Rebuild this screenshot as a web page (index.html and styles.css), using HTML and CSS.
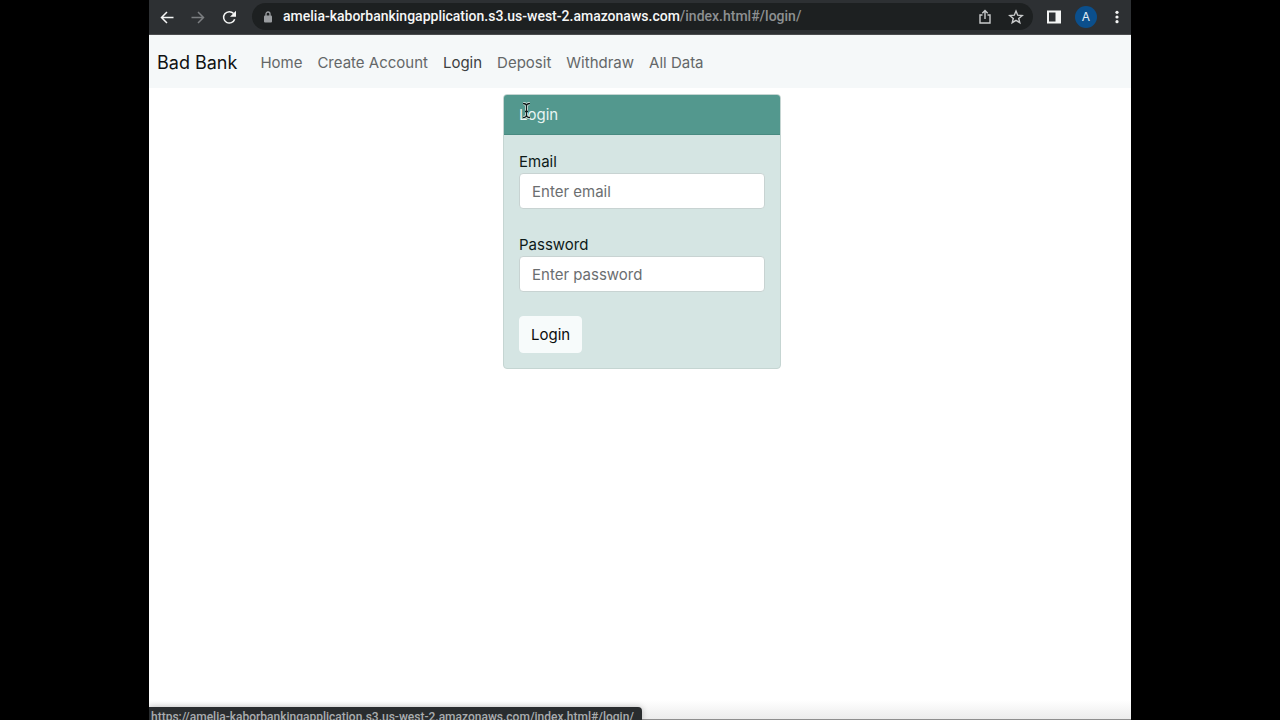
FILE: index.html
```html
<!DOCTYPE html>
<html lang="en">
<head>
<meta charset="utf-8">
<title>Bad Bank</title>
<link rel="stylesheet" href="styles.css">
</head>
<body>
<div class="window">
  <header class="toolbar">
    <button class="tool" aria-label="Back"><svg width="16" height="16" viewBox="0 0 16 16" class="line"><path d="M14.500 8.500H2.500M8 3 2.500 8.500 8 14"/></svg></button>
    <button class="tool tool-off" aria-label="Forward"><svg width="16" height="16" viewBox="0 0 16 16" class="line"><path d="M1.500 8.500h12M8 3 13.500 8.500 8 14"/></svg></button>
    <button class="tool" aria-label="Reload"><svg width="16" height="16" viewBox="0 0 16 16"><path class="line" d="M13.700 10.200A5.700 5.700 0 1 1 12.600 4.600"/><path fill="currentColor" d="M15 1.700v6H9z"/></svg></button>
    <div class="address">
      <svg class="lock" width="10" height="12" viewBox="0 0 10 12"><rect x="1" y="4.500" width="8" height="7" rx="1" fill="currentColor"/><path d="M3 5V3a2 2 0 0 1 4 0v2" fill="none" stroke="currentColor" stroke-width="1.300"/></svg>
      <span class="url">amelia-kaborbankingapplication.s3.us-west-2.amazonaws.com<span class="path">/index.html#/login/</span></span>
      <button class="tool tool-soft" aria-label="Share"><svg width="14" height="16" viewBox="0 0 14 16" class="line thin"><path d="M4.500 6H2v8h10V6H9.500M7 10V1.800M4.300 4.300 7 1.600l2.700 2.700"/></svg></button>
      <button class="tool tool-soft" aria-label="Bookmark"><svg width="16" height="16" viewBox="0 0 16 16" class="line thin"><path d="m8 2 1.700 4.200 4.500.3-3.500 2.900 1.100 4.300L8 11.300l-3.800 2.400 1.100-4.300-3.500-2.900 4.500-.3z"/></svg></button>
    </div>
    <button class="tool panel" aria-label="Side panel"><svg width="14" height="14" viewBox="0 0 14 14"><path fill="currentColor" fill-rule="evenodd" d="M0 .5h14v13H0zM2 2.500v9h6.500v-9z"/></svg></button>
    <button class="avatar" aria-label="Profile">A</button>
    <button class="tool menu" aria-label="Menu"><svg width="4" height="14" viewBox="0 0 4 14" fill="currentColor"><circle cx="2" cy="2.300" r="1.600"/><circle cx="2" cy="7" r="1.600"/><circle cx="2" cy="11.700" r="1.600"/></svg></button>
  </header>
  <nav class="navbar">
    <a class="brand" href="#/">Bad Bank</a>
    <a class="link" href="#/">Home</a>
    <a class="link" href="#/CreateAccount/">Create Account</a>
    <a class="link link-active" href="#/login/">Login</a>
    <a class="link" href="#/deposit/">Deposit</a>
    <a class="link" href="#/withdraw/">Withdraw</a>
    <a class="link" href="#/alldata/">All Data</a>
  </nav>
  <main class="content">
    <section class="card">
      <div class="card-header">Login
        <svg class="cursor" width="9" height="17" viewBox="0 0 9 17" fill="none"><path d="M1 1.500Q4.500 1.500 4.500 4Q4.500 1.500 8 1.500M4.500 4v9M1 15.500Q4.500 15.500 4.500 13Q4.500 15.500 8 15.500M3 9.500h3" stroke="#d8ebe7" stroke-width="3"/><path d="M1 1.500Q4.500 1.500 4.500 4Q4.500 1.500 8 1.500M4.500 4v9M1 15.500Q4.500 15.500 4.500 13Q4.500 15.500 8 15.500M3 9.500h3" stroke="#101b1a" stroke-width="1.300"/></svg>
      </div>
      <form class="card-body">
        <div class="field">
          <label for="email">Email</label>
          <input id="email" type="email" placeholder="Enter email">
        </div>
        <div class="field">
          <label for="password">Password</label>
          <input id="password" type="password" placeholder="Enter password">
        </div>
        <button class="submit" type="button">Login</button>
      </form>
    </section>
  </main>
  <div class="shade"></div>
  <div class="status">https://amelia-kaborbankingapplication.s3.us-west-2.amazonaws.com/index.html#/login/</div>
</div>
</body>
</html>
```
FILE: styles.css
```css
* { box-sizing: border-box; }
body {
  margin: 0;
  padding: 0 149px;
  background: #000;
  font-family: Inter, "Liberation Sans", sans-serif;
  font-size: 15px;
  line-height: 23px;
}
button, input { font: inherit; }
.window {
  position: relative;
  display: flex;
  flex-direction: column;
  min-height: 100vh;
  overflow: hidden;
  background: #fff;
}
.toolbar {
  display: flex;
  align-items: center;
  height: 35px;
  padding: 0 6px 1px 10px;
  background: #2d3033;
  border-bottom: 1px solid #4a4c4e;
}
.tool {
  display: flex;
  align-items: center;
  justify-content: center;
  width: 16px;
  height: 24px;
  margin-right: 15px;
  padding: 0;
  border: 0;
  background: none;
  color: #f4f5f5;
}
.tool-off { color: #7b7e81; }
.line { fill: none; stroke: currentColor; stroke-width: 1.5; }
.thin { stroke-width: 1.4; }
.address {
  display: flex;
  flex: 1;
  align-items: center;
  height: 27px;
  padding: 0 9px 0 11px;
  border-radius: 14px;
  background: #1d2021;
}
.lock { margin-right: 10px; color: #9a9da0; }
.url {
  flex: 1;
  color: #f5f6f6;
  font-family: Roboto, "Liberation Sans", sans-serif;
  font-size: 14px;
  font-weight: 500;
  white-space: nowrap;
}
.path { color: #8d9092; }
.tool-soft { color: #c9cbcc; }
.tool-soft:last-child { margin-right: 0; }
.panel { margin: 0 13px; }
.avatar {
  width: 22px;
  height: 22px;
  padding: 0;
  border: 0;
  border-radius: 50%;
  background: #0b4f8c;
  color: #e3edf6;
  font-size: 12px;
  line-height: 22px;
}
.menu { margin: 0 0 0 12px; }
.navbar {
  display: flex;
  align-items: center;
  gap: 15px;
  height: 53px;
  padding: 1px 8px 0;
  background: #f5f8f9;
}
.navbar a { text-decoration: none; white-space: nowrap; }
.navbar .brand { margin-right: 8px; color: #101112; font-size: 18px; }
.link { color: #646768; }
.navbar .link-active { color: #3d4041; }
.content { padding: 6px 0 0 4px; }
.card {
  max-width: 278px;
  margin: 0 auto;
  border: 1px solid #c5d5d2;
  border-radius: 4px;
  background: #d5e5e3;
  color: #0d1a19;
}
.card-header {
  position: relative;
  padding: 8px 15px;
  border-bottom: 1px solid #488a80;
  border-radius: 3px 3px 0 0;
  background: #53988e;
  color: #e8f5f2;
}
.cursor { position: absolute; left: 18px; top: 7px; }
.card-body {
  display: flex;
  flex-direction: column;
  align-items: flex-start;
  gap: 24px;
  padding: 15px;
}
.field { display: flex; flex-direction: column; width: 100%; }
.field input {
  width: 100%;
  height: 36px;
  padding: 0 12px;
  border: 1px solid #c8d3d2;
  border-radius: 4px;
  background: #fff;
  color: #212529;
}
.field input::placeholder { color: #6b6e70; opacity: 1; }
.submit {
  height: 37px;
  padding: 0 11px;
  border: 1px solid #f7fbfb;
  border-radius: 4px;
  background: #f7fbfb;
  color: #0b0d0d;
}
.shade {
  position: absolute;
  right: 0;
  bottom: 0;
  left: 0;
  height: 20px;
  border-bottom: 1px solid #8e8e8e;
  background: linear-gradient(#fff, #ececec);
}
.status {
  position: absolute;
  bottom: 0;
  left: 0;
  height: 13px;
  padding: 0 8px 0 2px;
  overflow: hidden;
  border-radius: 0 4px 0 0;
  background: #292c2e;
  box-shadow: 0 0 6px rgba(0, 0, 0, 0.25);
  color: #a9acae;
  font-family: Roboto, "Liberation Sans", sans-serif;
  font-size: 12px;
  font-weight: 500;
  line-height: 20px;
  white-space: nowrap;
}
```
